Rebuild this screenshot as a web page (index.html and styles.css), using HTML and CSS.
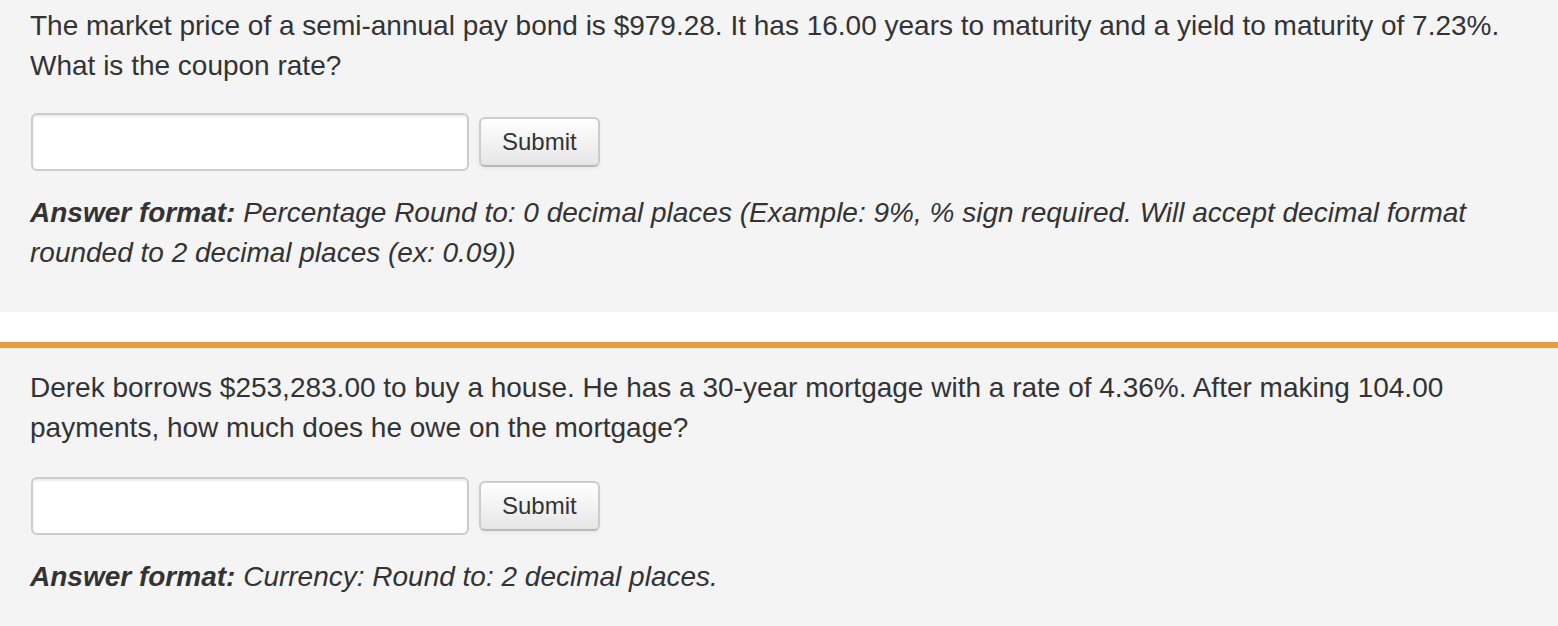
FILE: index.html
```html
<!DOCTYPE html>
<html>
<head>
<meta charset="utf-8">
<link rel="stylesheet" href="styles.css">
</head>
<body>
<div class="panel first">
  <p class="question">The market price of a semi-annual pay bond is $979.28. It has 16.00 years to maturity and a yield to maturity of 7.23%.<br>What is the coupon rate?</p>
  <div class="answer-row">
    <input class="answer-input" type="text">
    <button class="submit-btn">Submit</button>
  </div>
  <p class="format"><b>Answer format:</b> Percentage Round to: 0 decimal places (Example: 9%, % sign required. Will accept decimal format rounded to 2 decimal places (ex: 0.09))</p>
</div>
<div class="divider"></div>
<div class="panel second">
  <p class="question">Derek borrows $253,283.00 to buy a house. He has a 30-year mortgage with a rate of 4.36%. After making 104.00 payments, how much does he owe on the mortgage?</p>
  <div class="answer-row">
    <input class="answer-input" type="text">
    <button class="submit-btn">Submit</button>
  </div>
  <p class="format"><b>Answer format:</b> Currency: Round to: 2 decimal places.</p>
</div>
</body>
</html>
```
FILE: styles.css
```css
html, body {
  margin: 0;
  padding: 0;
  background: #ffffff;
}
body {
  font-family: "Liberation Sans", Arial, Helvetica, sans-serif;
  font-size: 28px;
  line-height: 40px;
  color: #333333;
}
.panel {
  background: #f4f4f4;
  padding: 0 10px 0 30px;
}
.panel.first {
  padding-top: 6px;
  padding-bottom: 39px;
}
.panel.second {
  padding-top: 20px;
  padding-bottom: 30px;
}
.question {
  margin: 0;
}
.answer-row {
  display: flex;
  align-items: center;
  gap: 10px;
  margin-top: 27px;
}
.second .answer-row {
  margin-top: 29px;
}
.answer-input {
  box-sizing: border-box;
  width: 438px;
  height: 58px;
  margin: 0 0 0 1px;
  border: 2px solid #cccccc;
  border-radius: 6px;
  background: #ffffff;
  box-shadow: inset 0 2px 2px rgba(0,0,0,0.075);
  font: inherit;
  padding: 4px 12px;
}
.submit-btn {
  box-sizing: border-box;
  height: 50px;
  padding: 0 21px;
  border: 2px solid #cccccc;
  border-bottom-color: #b8b8b8;
  border-radius: 6px;
  background: linear-gradient(to bottom, #ffffff, #e6e6e6);
  box-shadow: inset 0 2px 0 rgba(255,255,255,0.2), 0 2px 4px rgba(0,0,0,0.05);
  font-family: "Liberation Sans", Arial, Helvetica, sans-serif;
  font-size: 24px;
  color: #333333;
}
.format {
  margin: 22px 0 0 0;
  font-style: italic;
  max-width: 1450px;
}
.divider {
  height: 30px;
  background: #ffffff;
  border-bottom: 6px solid #ec9a3a;
}
```
